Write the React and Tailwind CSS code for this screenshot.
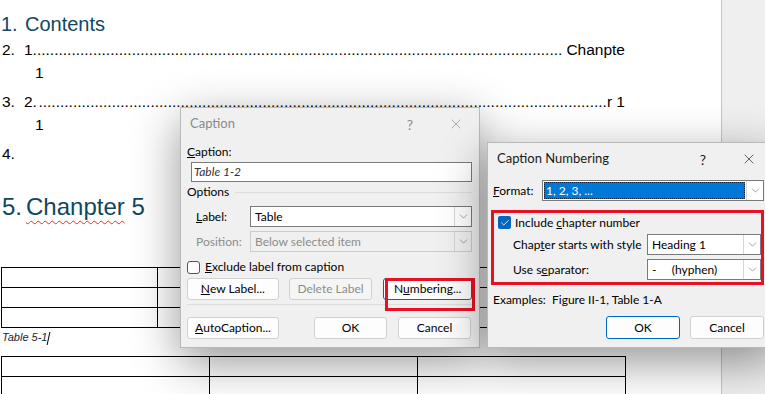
import React from 'react';
import { ChevronDown, X, Check } from 'lucide-react';

function TocLine({ num, entry, count, tail }) {
    return (
        <div className="flex items-baseline h-[23px] whitespace-nowrap">
            <span className="w-[24px] pl-[2px] shrink-0">{num}</span>
            <span className="shrink-0">{entry}</span>
            <span className="flex-1 min-w-0 text-right">{'.'.repeat(count)}</span>
            <span className="shrink-0">{tail}</span>
        </div>
    );
}

function Combo({ value, disabled, selected, className = '' }) {
    return (
        <div className={`flex h-[21px] border ${disabled ? 'border-[#cccccc] bg-[#f0f0f0] text-[#8d8d8d]' : 'border-[#7a7a7a] bg-white text-black'} ${className}`}>
            <div className="flex-1 flex items-center px-[1px] min-w-0 whitespace-nowrap">
                {selected ? (
                    <span className="flex-1 h-[17px] bg-[#0078d7] text-white pl-[2px] leading-[17px] outline outline-1 outline-dotted outline-[#0a2540] -outline-offset-1">{value}</span>
                ) : (
                    <span className="pl-[3px]">{value}</span>
                )}
            </div>
            <div className={`w-[17px] flex items-center justify-center border-l ${disabled ? 'border-[#d6d6d6]' : 'border-[#d6d6d6] bg-white'}`}>
                <ChevronDown className="w-[13px] h-[13px] text-[#555]" strokeWidth={1} />
            </div>
        </div>
    );
}

function Btn({ children, focus, disabled, className = '' }) {
    return (
        <div className={`h-[22px] flex items-center justify-center rounded-[3px] border ${focus ? 'border-[#0067c0] border-[1.5px]' : 'border-[#d0d0d0]'} ${disabled ? 'bg-[#f5f5f5] text-[#8d8d8d]' : 'bg-[#fdfdfd] text-black'} ${className}`}>
            {children}
        </div>
    );
}

function TitleBar({ title, inactive }) {
    return (
        <div className={`flex items-center h-[32px] text-[13px] ${inactive ? 'text-[#8a8a8a]' : 'text-[#1a1a1a]'}`}>
            <span className="pl-[9px] flex-1">{title}</span>
            <span className="w-[46px] text-center text-[14px]">?</span>
            <span className="w-[46px] flex justify-center">
                <X className="w-[16px] h-[16px]" strokeWidth={1} />
            </span>
        </div>
    );
}

export default function App() {
    return (
        <div className="relative w-[765px] h-[394px] overflow-hidden flex bg-white">
            {/* document page */}
            <div className="w-[721px] h-full bg-white text-black font-['Liberation_Sans',Arial,sans-serif] pt-[10px] pr-[96px]">
                <div className="text-[20px] text-[#0f4761] h-[28px] leading-[28px] whitespace-nowrap">
                    <span className="inline-block w-[25px] pl-[1px]">1.</span>Contents
                </div>
                <div className="text-[15.5px] leading-[23px]">
                    <TocLine num="2." entry="1." count={122} tail={'\u00a0Chanpte'} />
                    <div className="h-[29px] pl-[35px]">1</div>
                    <TocLine num="3." entry="2." count={132} tail="r 1" />
                    <div className="h-[29px] pl-[35px]">1</div>
                    <div className="h-[23px] pl-[2px]">4.</div>
                </div>
                <div className="mt-[27px] text-[24px] text-[#0f4761] h-[30px] leading-[30px] whitespace-nowrap">
                    <span className="inline-block w-[26px] pl-[2px]">5.</span>
                    <span className="underline decoration-wavy decoration-[#e0312a] decoration-1 underline-offset-[5px]">Chanpter</span> 5
                </div>
                <table className="mt-[45px] ml-[1px] border-collapse w-[720px]">
                    <tbody>
                        {[0, 1, 2].map((r) => (
                            <tr key={r} className="h-[20px]">
                                <td className="border border-black w-[156px]"></td>
                                <td className="border border-black"></td>
                            </tr>
                        ))}
                    </tbody>
                </table>
                <div className="h-[19px] pl-[2px] text-[11px] italic text-[#0e2841] leading-[19px]">
                    Table 5-1<span className="inline-block w-px h-[13px] bg-black align-middle ml-[1px] -skew-x-12"></span>
                </div>
                <table className="mt-[9px] ml-[1px] border-collapse w-[625px]">
                    <tbody>
                        {[0, 1].map((r) => (
                            <tr key={r} className="h-[20px]">
                                <td className="border border-black w-[208px]"></td>
                                <td className="border border-black w-[208px]"></td>
                                <td className="border border-black"></td>
                            </tr>
                        ))}
                    </tbody>
                </table>
            </div>
            <div className="flex-1 h-full border-l border-[#c4c4c4] bg-[#efefef]"></div>

            {/* Caption dialog */}
            <div className="absolute left-[180px] top-[107px] w-[300px] h-[241px] bg-[#f0f0f0] border border-[#b9b9b9] shadow-[0_14px_44px_rgba(0,0,0,0.42)] text-[12px] font-['Lato',sans-serif] text-black">
                <TitleBar title="Caption" inactive />
                <div className="pl-[6px] pr-[7px]">
                    <div className="h-[20px] leading-[20px] mt-[2px]"><u>C</u>aption:</div>
                    <div className="ml-[4px] h-[20px] border border-[#7a7a7a] bg-white italic pl-[2px] leading-[18px] text-[#333]">Table 1-2</div>
                    <div className="flex items-center h-[20px]">
                        <span>Options</span>
                        <span className="flex-1 ml-[6px] h-px bg-[#dcdcdc]"></span>
                    </div>
                    <div className="flex items-center mt-[4px] pl-[9px]">
                        <span className="w-[54px]"><u>L</u>abel:</span>
                        <Combo value="Table" className="flex-1" />
                    </div>
                    <div className="flex items-center mt-[4px] pl-[9px]">
                        <span className="w-[54px] text-[#8d8d8d]">Position:</span>
                        <Combo value="Below selected item" disabled className="flex-1" />
                    </div>
                    <div className="flex items-center h-[20px] mt-[5px] gap-[5px]">
                        <span className="w-[13px] h-[13px] rounded-[3px] border border-[#555] bg-white"></span>
                        <span><u>E</u>xclude label from caption</span>
                    </div>
                    <div className="flex mt-[1px]">
                        <Btn className="w-[92px]"><u>N</u>ew Label...</Btn>
                        <Btn disabled className="w-[84px] ml-[10px]">Delete Label</Btn>
                        <Btn focus className="w-[89px] ml-[11px]">N<u>u</u>mbering...</Btn>
                    </div>
                    <div className="h-px bg-[#dcdcdc] mt-[4px]"></div>
                    <div className="flex mt-[12px]">
                        <Btn className="w-[92px]"><u>A</u>utoCaption...</Btn>
                        <Btn className="w-[73px] ml-[35px]">OK</Btn>
                        <Btn className="w-[73px] ml-[11px]">Cancel</Btn>
                    </div>
                </div>
            </div>
            <div className="absolute left-[385px] top-[278px] w-[90px] h-[33px] border-[3px] border-[#e81123]"></div>

            {/* Caption Numbering dialog */}
            <div className="absolute left-[487px] top-[142px] w-[292px] h-[206px] bg-[#f0f0f0] border border-[#b9b9b9] shadow-[0_14px_44px_rgba(0,0,0,0.42)] text-[12px] font-['Lato',sans-serif] text-black">
                <div className="pr-[6px]">
                    <TitleBar title="Caption Numbering" />
                </div>
                <div className="pl-[5px] pr-[14px]">
                    <div className="flex items-center mt-[5px]">
                        <span className="w-[49px]"><u>F</u>ormat:</span>
                        <Combo value="1, 2, 3, ..." selected className="flex-1" />
                    </div>
                    <div className="mt-[9px] -ml-[2px] h-[75px] border-[3px] border-[#e81123] pl-[4px] pt-[1px]">
                        <div className="flex items-center h-[17px] gap-[4px]">
                            <span className="w-[13px] h-[13px] rounded-[2px] bg-[#0067c0] flex items-center justify-center">
                                <Check className="w-[10px] h-[10px] text-white" strokeWidth={2} />
                            </span>
                            <span>Include <u>c</u>hapter number</span>
                        </div>
                        <div className="flex items-center mt-[3px] pl-[15px]">
                            <span className="w-[134px] whitespace-nowrap">Chap<u>t</u>er starts with style</span>
                            <Combo value="Heading 1" className="flex-1" />
                        </div>
                        <div className="flex items-center mt-[4px] pl-[15px]">
                            <span className="w-[134px] whitespace-nowrap">Use s<u>e</u>parator:</span>
                            <Combo value={'-\u00a0\u00a0\u00a0\u00a0\u00a0(hyphen)'} className="flex-1" />
                        </div>
                    </div>
                    <div className="flex items-center h-[20px] mt-[5px]">
                        <span className="w-[59px]">Examples:</span>
                        <span>Figure II-1, Table 1-A</span>
                    </div>
                    <div className="flex justify-end mt-[6px]">
                        <Btn focus className="w-[74px] h-[23px]">OK</Btn>
                        <Btn className="w-[74px] h-[23px] ml-[10px]">Cancel</Btn>
                    </div>
                </div>
            </div>
        </div>
    );
}
